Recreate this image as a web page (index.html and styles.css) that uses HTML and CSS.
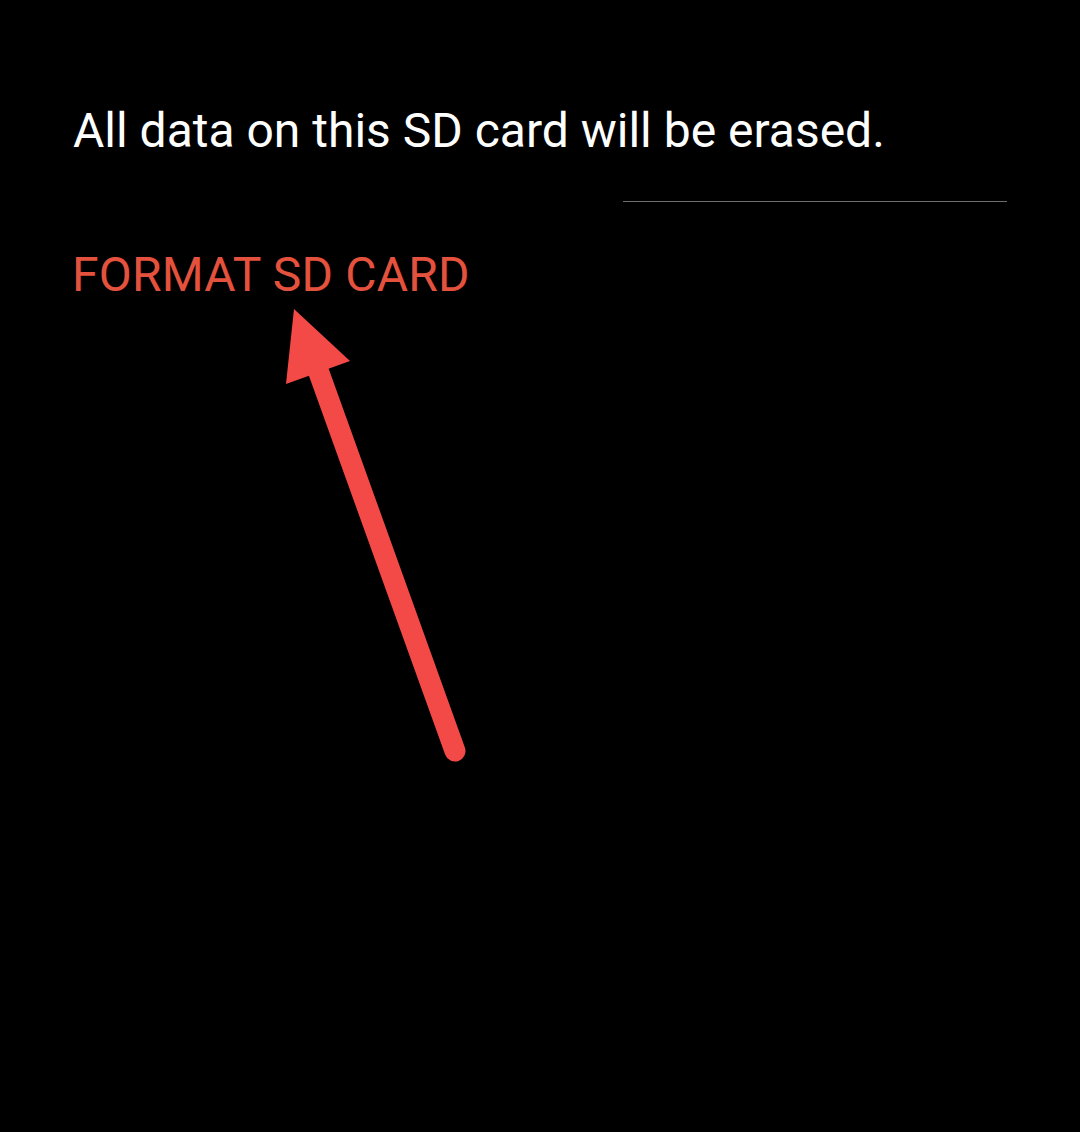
FILE: index.html
```html
<!DOCTYPE html>
<html>
<head>
<meta charset="utf-8">
<link rel="stylesheet" href="styles.css">
</head>
<body>
<div class="screen">
  <p class="message">All data on this SD card will be erased.</p>
  <div class="divider-row"><div class="divider"></div></div>
  <div class="action">FORMAT SD CARD</div>
  <svg class="arrow" width="1080" height="1132" viewBox="0 0 1080 1132">
    <line x1="455" y1="751" x2="318" y2="370" stroke="#f44a47" stroke-width="21" stroke-linecap="round"/>
    <polygon points="294,309 286,384 350,361" fill="#f44a47"/>
  </svg>
</div>
</body>
</html>
```
FILE: styles.css
```css
html, body {
  margin: 0;
  padding: 0;
  background: #000;
}
.screen {
  position: relative;
  width: 1080px;
  height: 1132px;
  background: #000;
  font-family: Roboto, "Noto Sans", sans-serif;
  overflow: hidden;
}
.message {
  margin: 0;
  padding: 103px 0 0 73px;
  color: #fff;
  font-size: 48px;
  line-height: 56px;
}
.divider-row {
  display: flex;
  justify-content: flex-end;
  padding: 42px 73px 0 0;
}
.divider {
  width: 384px;
  height: 1px;
  background: #6e6e6e;
}
.action {
  padding: 45px 0 0 72px;
  color: #e4523d;
  font-size: 48px;
  line-height: 56px;
  letter-spacing: 0.2px;
}
.arrow {
  position: absolute;
  left: 0;
  top: 0;
}
```
